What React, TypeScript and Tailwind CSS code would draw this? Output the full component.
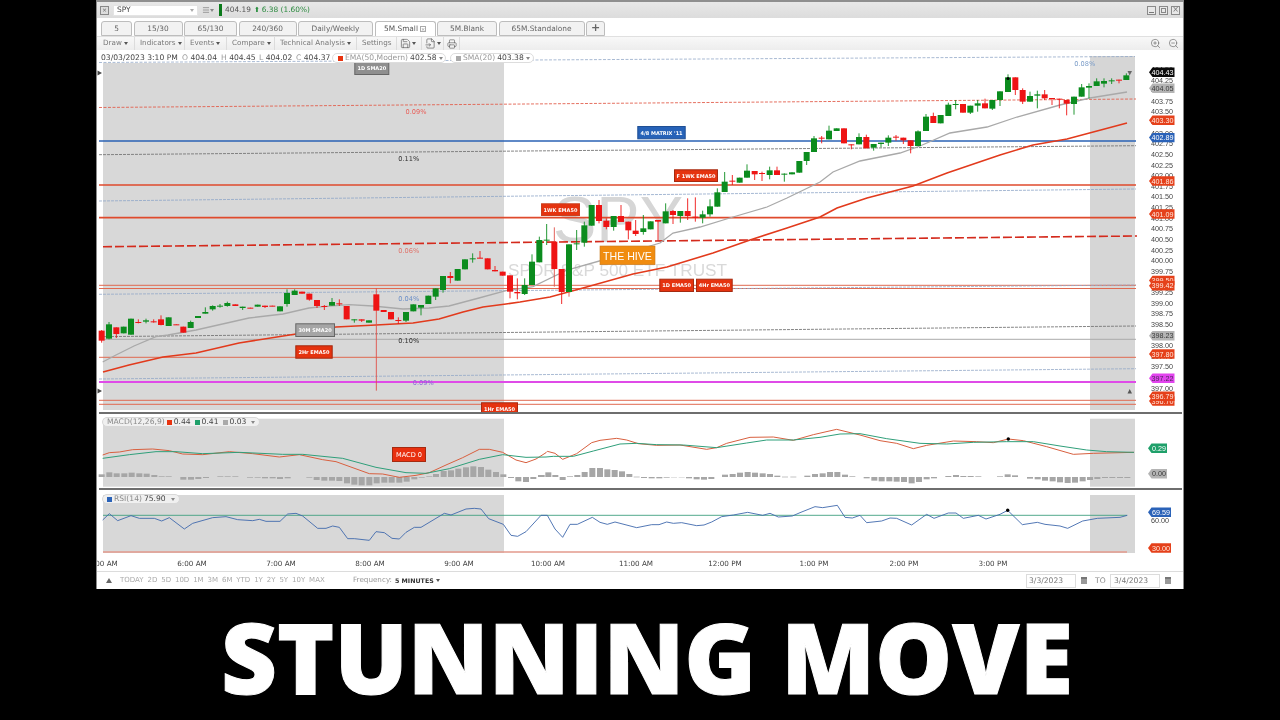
import { Save, FileInput, Printer, ZoomIn, ZoomOut, Menu } from "lucide-react";

type Row = [number, number, number, number, number, string];
const zone = (ox: number, oy: number, rows: Row[]) =>
  rows.map(([x, t, b, wt, wb, c]) => ({
    x: x / 3 + ox,
    t: t / 3 + oy,
    b: b / 3 + oy,
    wt: wt / 3 + oy,
    wb: wb / 3 + oy,
    c,
  }));

const candles = [
  ...zone(96, 240, [
    [17, 272, 302, 270, 308, "r"], [39, 253, 296, 246, 298, "g"], [61, 262, 282, 262, 294, "r"], [83, 260, 280, 260, 280, "g"],
    [105, 236, 284, 236, 284, "g"], [127, 246, 249, 238, 250, "r"], [150, 241, 245, 236, 250, "g"], [173, 244, 246, 238, 248, "r"],
    [195, 238, 255, 226, 256, "r"], [218, 232, 258, 232, 258, "g"], [241, 253, 255, 253, 255, "r"], [262, 260, 278, 260, 278, "r"],
    [284, 246, 264, 242, 264, "g"], [306, 228, 234, 228, 234, "g"], [328, 216, 221, 202, 221, "g"], [350, 198, 208, 196, 212, "g"],
    [372, 197, 199, 192, 203, "g"], [394, 189, 198, 185, 200, "g"], [418, 193, 198, 193, 198, "r"], [440, 200, 204, 200, 210, "g"],
    [463, 203, 205, 203, 205, "r"], [485, 194, 200, 194, 200, "g"], [507, 197, 201, 197, 204, "r"], [529, 197, 199, 197, 199, "r"],
    [552, 199, 214, 199, 214, "g"], [573, 159, 192, 148, 200, "g"], [596, 152, 165, 148, 165, "g"], [618, 155, 161, 155, 161, "r"],
    [640, 161, 179, 161, 182, "r"], [663, 180, 198, 180, 204, "r"], [685, 198, 200, 195, 210, "r"], [708, 186, 197, 174, 197, "g"],
    [730, 190, 192, 178, 198, "r"], [752, 198, 238, 198, 238, "r"], [775, 238, 240, 238, 248, "g"], [797, 238, 242, 238, 246, "r"],
    [819, 241, 248, 241, 248, "g"], [841, 163, 212, 144, 452, "r"], [863, 210, 216, 210, 216, "r"], [885, 216, 238, 216, 238, "r"],
    [907, 240, 242, 232, 252, "r"], [930, 216, 242, 216, 246, "g"], [952, 193, 214, 193, 214, "g"], [975, 195, 203, 195, 226, "g"],
    [997, 167, 192, 167, 192, "g"], [1019, 145, 170, 145, 180, "g"], [1041, 108, 150, 108, 158, "g"], [1063, 108, 114, 96, 130, "r"],
    [1085, 87, 122, 87, 122, "g"], [1107, 58, 88, 58, 88, "g"], [1130, 55, 57, 40, 68, "g"], [1152, 53, 55, 33, 55, "r"],
    [1175, 55, 88, 55, 88, "r"], [1197, 90, 94, 78, 94, "r"],
  ]),
  ...zone(500, 120, [
    [8, 455, 467, 455, 467, "r"], [30, 466, 515, 466, 535, "r"], [52, 516, 520, 475, 538, "r"], [74, 495, 522, 475, 525, "g"],
    [96, 425, 495, 403, 495, "g"], [118, 360, 427, 350, 427, "g"], [140, 359, 362, 312, 375, "g"], [163, 365, 447, 322, 500, "r"],
    [185, 447, 516, 447, 552, "r"], [207, 373, 516, 373, 530, "g"], [230, 370, 373, 330, 390, "g"], [253, 316, 368, 305, 380, "g"],
    [275, 255, 317, 255, 317, "g"], [297, 255, 303, 240, 310, "r"], [319, 302, 321, 295, 328, "r"], [341, 288, 321, 288, 332, "g"],
    [363, 288, 306, 255, 306, "r"], [385, 305, 331, 305, 358, "r"], [407, 332, 342, 300, 348, "r"], [430, 325, 336, 285, 344, "g"],
    [452, 304, 328, 304, 328, "g"], [474, 300, 305, 300, 362, "r"], [497, 274, 310, 250, 310, "g"], [519, 273, 285, 270, 312, "r"],
    [541, 273, 288, 273, 308, "g"], [563, 273, 288, 235, 300, "r"], [586, 290, 292, 232, 305, "r"], [608, 283, 293, 272, 310, "g"],
    [630, 259, 283, 238, 290, "g"], [652, 217, 260, 205, 260, "g"], [674, 185, 216, 156, 216, "g"], [697, 182, 185, 165, 195, "r"],
    [719, 173, 188, 173, 188, "g"], [741, 152, 173, 133, 173, "g"], [764, 153, 163, 153, 180, "r"], [786, 159, 161, 155, 183, "r"],
    [809, 151, 165, 140, 178, "g"], [831, 151, 165, 140, 165, "r"], [853, 161, 163, 160, 185, "g"], [876, 157, 163, 157, 163, "g"],
    [898, 123, 158, 123, 158, "g"], [920, 96, 123, 96, 135, "g"],
  ]),
  ...zone(800, 60, [
    [42, 235, 276, 228, 276, "g"], [65, 233, 236, 228, 250, "r"], [87, 212, 238, 197, 238, "g"], [110, 205, 213, 205, 213, "g"],
    [132, 205, 250, 205, 250, "r"], [154, 253, 256, 253, 268, "r"], [177, 231, 253, 220, 253, "g"], [199, 231, 265, 224, 265, "r"],
    [221, 252, 263, 252, 272, "g"], [243, 248, 252, 248, 262, "g"], [265, 233, 248, 226, 258, "g"], [288, 230, 232, 225, 242, "r"],
    [310, 233, 241, 233, 252, "r"], [332, 241, 258, 241, 280, "r"], [354, 214, 258, 211, 258, "g"], [378, 170, 213, 162, 213, "g"],
    [400, 168, 189, 158, 189, "r"], [422, 165, 190, 165, 190, "g"], [445, 134, 168, 128, 168, "g"], [467, 132, 134, 120, 148, "g"],
    [489, 132, 158, 132, 158, "r"], [511, 137, 158, 137, 162, "g"], [533, 130, 137, 120, 155, "g"], [555, 130, 145, 116, 145, "r"],
    [577, 120, 146, 120, 150, "g"], [600, 94, 120, 94, 138, "g"], [624, 52, 96, 43, 96, "g"], [646, 52, 90, 52, 105, "r"],
    [668, 90, 125, 85, 132, "r"], [690, 108, 125, 95, 125, "g"], [712, 103, 107, 92, 145, "g"], [734, 103, 115, 90, 120, "r"],
    [756, 114, 116, 114, 135, "r"], [778, 116, 118, 116, 145, "r"], [800, 120, 131, 120, 166, "r"], [822, 110, 132, 110, 164, "g"],
    [845, 82, 110, 72, 110, "g"], [867, 78, 83, 70, 115, "g"], [890, 64, 78, 55, 78, "g"], [912, 63, 71, 55, 82, "g"],
    [935, 61, 63, 55, 72, "g"], [957, 59, 61, 59, 70, "r"], [979, 46, 60, 40, 60, "g"],
  ]),
];

const toPts = (ox: number, oy: number, p: number[][]) => p.map(([x, y]) => `${x / 3 + ox},${y / 3 + oy}`).join(" ");

const sma = "102.7,362 116,355 134,346 156,336.7 168,335 196,330 249,318 283,314 309,308 323,306.7 349,304.7 373,306 403,309 429,308 449,306 479,298 506,290.7 533,286.7 567,270 610,258 660,243 673,233 700,227 733,217 767,207 787,198 820,182 833,172 860,161 900,153 920,146 950,133 987,127 1017,117 1060,105 1090,98 1127,92";
const ema = "103,372 129,365 163,357 196,353 239,343 296,334 336,327 376,325 413,323 439,319 463,312 483,307 506,304 520,302 550,297 583,288 633,274 667,267 713,253 750,240 787,228 820,217 837,208 867,198 913,186 947,173 1000,155 1033,145 1067,139 1127,123";

const macdRed = [
  toPts(96, 410, [[20,135],[40,128],[70,126],[110,119],[170,117],[220,122],[260,132],[320,134],[400,125],[470,131],[550,141],[610,134],[680,149],[720,155],[820,191],[860,192],[910,202],[960,196],[1000,188],[1050,165],[1100,143],[1150,118],[1180,118],[1220,127],[1260,150],[1290,158],[1320,147],[1350,128]]),
  toPts(540, 410, [[22,124],[45,130],[68,148],[110,131],[155,98],[180,91],[230,85],[260,90],[295,101],[350,106],[420,105],[500,118],[530,113],[560,100],[630,82],[700,81],[760,91],[820,74],[890,58],[960,75]]),
  toPts(860, 410, [[60,92],[110,100],[160,116],[200,106],[280,93],[350,95],[400,98],[445,87],[490,92],[560,110],[640,133],[700,130],[822,127]]),
].join(" ");
const macdGreen = [
  toPts(96, 410, [[20,145],[100,134],[180,125],[240,125],[320,131],[430,127],[560,133],[620,133],[740,145],[840,172],[930,188],[990,190],[1060,176],[1150,148],[1220,134],[1290,142],[1350,141]]),
  toPts(540, 410, [[40,139],[100,139],[160,123],[240,102],[290,100],[350,104],[430,105],[530,113],[620,99],[680,90],[760,90],[840,82],[900,72],[960,71]]),
  toPts(860, 410, [[80,86],[180,100],[260,102],[340,97],[440,95],[520,95],[600,108],[680,120],[740,125],[822,127]]),
].join(" ");
const rsi = [
  toPts(96, 410, [[20,330],[40,311],[65,332],[105,317],[130,325],[175,325],[197,333],[220,323],[265,357],[290,340],[350,323],[390,320],[425,329],[470,332],[490,328],[510,334],[552,334],[575,312],[600,310],[620,318],[665,355],[690,355],[710,348],[730,352],[755,386],[775,386],[820,391],[840,365],[865,368],[888,385],[910,387],[930,367],[955,352],[975,352],[1045,310],[1065,315],[1110,297],[1135,295],[1155,297],[1178,326],[1222,343],[1245,376],[1265,379],[1290,365],[1335,316],[1350,316]]),
  toPts(540, 410, [[22,316],[45,357],[68,382],[90,343],[112,343],[157,322],[180,337],[202,343],[225,336],[290,353],[335,344],[357,344],[380,336],[400,340],[425,338],[470,347],[492,345],[515,336],[545,320],[580,315],[623,307],[668,316],[690,310],[715,321],[757,318],[780,308],[825,290],[848,293],[892,286],[915,322],[937,324],[960,316]]),
  toPts(860, 410, [[20,338],[65,333],[90,324],[110,325],[155,345],[200,313],[222,325],[265,309],[288,309],[310,325],[355,316],[378,327],[420,313],[443,301],[487,344],[532,337],[555,343],[600,348],[623,355],[668,333],[712,325],[780,322],[802,316]]),
].join(" ");

const hist = (ox: number, rows: number[][]) => rows.map(([x, t, b]) => ({ x: x / 3 + ox, t: t / 3 + 410, b: b / 3 + 410 }));
const bars = [
  ...hist(96, [[17,193,201],[40,187,201],[62,190,201],[85,190,201],[107,188,201],[130,190,201],[152,191,201],[175,195,201],[197,198,200],[218,198,200],[262,201,209],[285,201,209],[307,201,207],[330,201,204],[373,199,201],[395,199,201],[418,199,201],[462,201,203],[485,201,203],[507,201,205],[530,201,205],[552,201,207],[575,201,205],[640,201,203],[662,201,210],[685,201,212],[708,201,212],[730,201,213],[753,201,220],[775,201,224],[797,201,226],[820,201,226],[842,201,220],[865,201,218],[887,201,218],[910,201,218],[932,201,215],[955,201,208],[977,201,203],[1000,199,201],[1020,192,201],[1043,183,201],[1065,181,201],[1087,176,201],[1110,172,201],[1132,169,201],[1155,171,201],[1177,179,201],[1200,186,201],[1222,193,201],[1245,201,204],[1267,201,214],[1290,201,216],[1312,201,207],[1335,195,201]]),
  ...hist(540, [[5,195,201],[25,187,201],[46,195,201],[68,201,210],[90,199,201],[112,195,201],[134,186,201],[157,174,201],[180,174,201],[202,178,201],[224,180,201],[246,184,201],[268,192,201],[290,200,202],[312,201,204],[335,201,205],[358,201,205],[380,201,203],[402,201,202],[425,201,202],[447,201,205],[470,201,208],[492,201,209],[514,201,207],[555,194,201],[578,192,201],[600,188,201],[623,186,201],[645,188,201],[668,190,201],[690,192,201],[712,197,201],[735,200,202],[760,200,202],[802,197,201],[825,192,201],[848,190,201],[870,186,201],[892,186,201],[915,194,201],[937,199,201]]),
  ...hist(860, [[20,201,205],[43,201,212],[65,201,214],[88,201,214],[110,201,215],[132,201,216],[155,201,220],[177,201,216],[200,201,208],[222,201,205],[265,198,201],[288,195,201],[310,198,201],[332,198,201],[355,199,201],[420,199,201],[443,193,201],[465,196,201],[510,201,206],[533,201,208],[555,201,212],[578,201,214],[600,201,217],[623,201,219],[645,201,218],[668,201,214],[690,201,210],[712,201,207],[735,201,204],[757,201,204],[780,201,204],[802,201,204]]),
];

const ticks: { v: string; y: number }[] = [];
for (let v = 404.5; v >= 397; v -= 0.25) ticks.push({ v: v.toFixed(2), y: 80 + (404.25 - v) * 42.48 });

const flagColors: Record<string, [string, string]> = {
  black: ["#0a0a0a", "#ffffff"],
  gray: ["#b4b4b4", "#3a3a3a"],
  red: ["#e5401a", "#ffe9df"],
  blue: ["#2a62b8", "#ffffff"],
  mag: ["#e244ee", "#4a2a5a"],
  green: ["#1fa06a", "#ffffff"],
};
const Flag = ({ y, t, c, x0 = 1149, x1 = 1174.5 }: { y: number; t: string; c: string; x0?: number; x1?: number }) => (
  <g>
    <polygon points={`${x0},${y} ${x0 + 3.5},${y - 4.7} ${x1},${y - 4.7} ${x1},${y + 4.7} ${x0 + 3.5},${y + 4.7}`} fill={flagColors[c][0]} />
    <text x={x1 - 1} y={y + 2.6} textAnchor="end" fontSize="7.2" fontWeight="500" fill={flagColors[c][1]} className="font-['Liberation_Sans',sans-serif]">{t}</text>
  </g>
);

const Tag = ({ x0, x1, y0, y1, t, fill, edge }: { x0: number; x1: number; y0: number; y1: number; t: string; fill: string; edge: string }) => (
  <g>
    <rect x={x0 + 0.5} y={y0 + 0.5} width={x1 - x0 - 1} height={y1 - y0 - 1} fill={fill} stroke={edge} strokeWidth="1" />
    <text x={(x0 + x1) / 2} y={(y0 + y1) / 2 + 1.9} textAnchor="middle" fontSize="5" fontWeight="700" fill="#fff" className="font-['DejaVu_Sans',sans-serif]">{t}</text>
  </g>
);

const Pct = ({ x, y, t, c }: { x: number; y: number; t: string; c: string }) => (
  <text x={x} y={y + 2.4} textAnchor="middle" fontSize="6.6" fill={c} className="font-['DejaVu_Sans',sans-serif]">{t}</text>
);

const tabs = [
  { t: "5", w: "w-[31px]" },
  { t: "15/30", w: "w-[49px]" },
  { t: "65/130", w: "w-[53px]" },
  { t: "240/360", w: "w-[58px]" },
  { t: "Daily/Weekly", w: "w-[75px]" },
  { t: "5M.Small", w: "w-[61px]", on: true },
  { t: "5M.Blank", w: "w-[60px]" },
  { t: "65M.Standalone", w: "w-[86px]" },
  { t: "+", w: "w-[19px]", plus: true },
];

const tools = [
  { t: "Draw", w: "w-[38px]" },
  { t: "Indicators", w: "w-[50px]" },
  { t: "Events", w: "w-[42px]" },
  { t: "Compare", w: "w-[48px]" },
  { t: "Technical Analysis", w: "w-[82px]" },
];

const periods = ["TODAY", "2D", "5D", "10D", "1M", "3M", "6M", "YTD", "1Y", "2Y", "5Y", "10Y", "MAX"];

const Caret = ({ c = "border-t-[#666]" }: { c?: string }) => (
  <span className={`inline-block w-0 h-0 border-x-[2px] border-x-transparent border-t-[3px] ${c}`} />
);

const WinBox = ({ children }: { children: React.ReactNode }) => (
  <div className="w-[9px] h-[9px] border border-[#8a8a8a] bg-[#e8e8e8] flex items-center justify-center text-[#777]">{children}</div>
);

export default function App() {
  return (
    <div className="w-[1280px] h-[720px] bg-black flex flex-col overflow-hidden font-['DejaVu_Sans',sans-serif]">
      <div className="ml-[96px] w-[1088px] h-[589px] shrink-0 bg-white flex flex-col border-x border-[#8a8a8a] blur-[0.3px]">
        {/* title bar */}
        <div className="h-[18px] shrink-0 flex items-center border-t-2 border-[#8f8f8f] bg-gradient-to-b from-[#e8e8e8] to-[#dcdcdc] pl-[3px] pr-[3px]">
          <div className="w-[9px] h-[9px] border border-[#888] bg-[#ddd] flex items-center justify-center text-[6px] leading-none text-[#666]">×</div>
          <div className="ml-[4px] w-[85px] h-[11px] bg-white border border-[#e4e4e4] flex items-center justify-between px-[3px] text-[7.5px] text-[#444]">
            <span>SPY</span>
            <Caret c="border-t-[#aaa]" />
          </div>
          <Menu size={8} className="ml-[4px] text-[#777]" />
          <Caret c="border-t-[#888]" />
          <div className="ml-[5px] w-[3px] h-[12px] bg-[#0b7a1a]" />
          <span className="ml-[3px] text-[7.4px] text-[#555]">404.19</span>
          <span className="ml-[3px] text-[7px] leading-none text-[#1e8a35]">⬆</span>
          <span className="ml-[2px] text-[7.4px] text-[#2a8a3e]">6.38 (1.60%)</span>
          <div className="ml-auto flex gap-[3px]">
            <WinBox><span className="w-[5px] h-[1px] mt-[4px] bg-[#777]" /></WinBox>
            <WinBox><span className="w-[5px] h-[5px] border border-[#888]" /></WinBox>
            <WinBox><span className="text-[8px] leading-none">×</span></WinBox>
          </div>
        </div>
        {/* tabs */}
        <div className="h-[18px] shrink-0 flex items-end gap-[1.5px] pl-[4px] pt-[3px] bg-white">
          {tabs.map((t) => (
            <div
              key={t.t}
              className={`${t.w} h-[15px] shrink-0 flex items-center justify-center gap-[2px] rounded-t-[3px] border border-[#bdbdbd] text-[7.4px] ${t.on ? "border-b-0 bg-white text-[#555]" : "bg-[#f2f2f2] text-[#666]"} ${t.plus ? "text-[11px] font-bold" : ""}`}
            >
              {t.t}
              {t.on && <span className="w-[6px] h-[6px] border border-[#aaa] flex items-center justify-center text-[5px] leading-none text-[#888]">×</span>}
            </div>
          ))}
        </div>
        {/* toolbar */}
        <div className="h-[14px] shrink-0 flex items-center bg-gradient-to-b from-[#f8f8f8] to-[#ededed] border-t border-[#e0e0e0] text-[7.2px] text-[#777]">
          {tools.map((t) => (
            <div key={t.t} className={`${t.w} h-full flex items-center gap-[2px] border-r border-[#dcdcdc] ${t.t === "Draw" ? "pl-[6px]" : "pl-[5px]"}`}>
              {t.t}
              <Caret c="border-t-[#555]" />
            </div>
          ))}
          <div className="w-[40px] h-full flex items-center border-r border-[#dcdcdc] pl-[5px]">Settings</div>
          <div className="w-[25px] h-full flex items-center gap-[1px] border-r border-[#dcdcdc] pl-[3px]">
            <Save size={11} strokeWidth={1.4} className="text-[#555]" />
            <Caret c="border-t-[#555]" />
          </div>
          <div className="w-[22px] h-full flex items-center gap-[1px] border-r border-[#dcdcdc] pl-[3px]">
            <FileInput size={11} strokeWidth={1.4} className="text-[#555]" />
            <Caret c="border-t-[#555]" />
          </div>
          <div className="w-[16px] h-full flex items-center border-r border-[#dcdcdc] pl-[3px]">
            <Printer size={10} strokeWidth={1.4} className="text-[#555]" />
          </div>
          <div className="ml-auto flex gap-[7px] pr-[4px]">
            <ZoomIn size={11} strokeWidth={1.4} className="text-[#666]" />
            <ZoomOut size={11} strokeWidth={1.4} className="text-[#666]" />
          </div>
        </div>
        {/* main chart */}
        <div className="relative h-[362px] shrink-0 overflow-hidden">
          <svg viewBox="97 50 1086 362" className="block w-[1086px] h-[362px]">
            <rect x="103" y="63" width="401" height="347" fill="#d8d8d8" />
            <rect x="1090" y="56" width="45" height="354" fill="#d6d6d6" />
            <text x="553" y="242" fontSize="65" fill="#d6d6d6" className="font-['Liberation_Sans',sans-serif]">SPY</text>
            <text x="508" y="276" fontSize="17.2" fill="#d9d9d9" className="font-['Liberation_Sans',sans-serif]">SPDR S&amp;P 500 ETF TRUST</text>

            <line x1="99" y1="62.5" x2="1135" y2="56.5" stroke="#93a8c8" strokeWidth="0.8" strokeDasharray="3 1.5" />
            <line x1="99" y1="107.5" x2="1136" y2="99" stroke="#e2604e" strokeWidth="0.9" strokeDasharray="3 1.5" />
            <line x1="99" y1="141" x2="1136" y2="141" stroke="#2a62b5" strokeWidth="1.6" />
            <line x1="99" y1="154.7" x2="1136" y2="145.7" stroke="#777" strokeWidth="0.9" strokeDasharray="3 1" />
            <line x1="99" y1="185" x2="1136" y2="185" stroke="#df4a2c" strokeWidth="1.7" />
            <line x1="99" y1="201" x2="1136" y2="189" stroke="#8ea6c8" strokeWidth="0.8" strokeDasharray="3 1" />
            <line x1="99" y1="217.7" x2="1136" y2="217.7" stroke="#df4a2c" strokeWidth="1.7" />
            <line x1="103" y1="246.7" x2="1137" y2="236" stroke="#d42a1c" strokeWidth="1.6" strokeDasharray="9 3" />
            <line x1="99" y1="285.3" x2="1136" y2="285.3" stroke="#e06a50" strokeWidth="1" />
            <line x1="99" y1="288.5" x2="1136" y2="288.5" stroke="#e06a50" strokeWidth="1" />
            <line x1="99" y1="294.3" x2="1136" y2="285" stroke="#93a8c8" strokeWidth="0.8" strokeDasharray="3 1" />
            <line x1="99" y1="336.7" x2="1136" y2="326" stroke="#777" strokeWidth="0.9" strokeDasharray="3 1" />
            <line x1="99" y1="339.3" x2="1136" y2="339.3" stroke="#ababab" strokeWidth="1" />
            <line x1="99" y1="357.3" x2="1136" y2="357.3" stroke="#e06a50" strokeWidth="1" />
            <line x1="99" y1="379" x2="1136" y2="368.7" stroke="#93a8c8" strokeWidth="0.8" strokeDasharray="3 1" />
            <line x1="99" y1="382" x2="1136" y2="382" stroke="#df4be8" strokeWidth="2.2" />
            <line x1="99" y1="400.3" x2="1136" y2="400.3" stroke="#e06a50" strokeWidth="1" />
            <line x1="99" y1="404.3" x2="1136" y2="404.3" stroke="#e06a50" strokeWidth="1" />

            <polyline points={sma} fill="none" stroke="#a9a9a9" strokeWidth="1.3" />
            <polyline points={ema} fill="none" stroke="#e23a1c" strokeWidth="1.6" />

            {candles.map((k, i) => {
              const col = k.c === "g" ? "#0b8c1e" : "#ee1414";
              return (
                <g key={i}>
                  <line x1={k.x} x2={k.x} y1={k.wt} y2={k.wb} stroke={k.wb - k.wt > 50 ? "#e0504a" : col} strokeWidth="0.9" />
                  <rect x={k.x - 3} y={k.t} width="6" height={Math.max(1, k.b - k.t)} fill={col} />
                </g>
              );
            })}
            <circle cx="1008" cy="78.5" r="1.6" fill="#000" />
            <polygon points="1127.5,71 1132,71 1129.7,75.5" fill="#666" />
            <polygon points="97.5,70.5 97.5,75.5 102,73" fill="#444" />
            <polygon points="97.5,388.5 97.5,393.5 102,391" fill="#444" />
            <polygon points="1127.5,393.5 1132,393.5 1129.7,389" fill="#555" />

            <Pct x={416} y={111.7} t="0.09%" c="#e8605a" />
            <Pct x={408.7} y={158.7} t="0.11%" c="#333" />
            <Pct x={408.7} y={250.7} t="0.06%" c="#e0736a" />
            <Pct x={408.7} y={298.3} t="0.04%" c="#6a8fc8" />
            <Pct x={408.7} y={340.3} t="0.10%" c="#333" />
            <Pct x={423.3} y={382.3} t="0.09%" c="#8a6ad8" />
            <Pct x={1084.7} y={63.3} t="0.08%" c="#7a9cc8" />

            <Tag x0={354.3} x1={389.3} y0={61.7} y1={75} t="1D SMA20" fill="#8f8f8f" edge="#666" />
            <Tag x0={637.3} x1={685.7} y0={126} y1={139.3} t="4/8 MATRIX '11" fill="#2662b8" edge="#1f4f94" />
            <Tag x0={674} x1={718} y0={169.3} y1={182} t="F 1WK EMA50" fill="#e5330f" edge="#a52a10" />
            <Tag x0={541} x1={580} y0={203.3} y1={216} t="1WK EMA50" fill="#e5330f" edge="#c8401f" />
            <Tag x0={659.3} x1={694} y0={278.7} y1={292} t="1D EMA50" fill="#e5330f" edge="#a52a10" />
            <Tag x0={696} x1={732.7} y0={278.7} y1={292} t="4Hr EMA50" fill="#e5330f" edge="#a52a10" />
            <Tag x0={295.3} x1={335} y0={323.3} y1={337} t="30M SMA20" fill="#a5a5a5" edge="#666" />
            <Tag x0={295.3} x1={332.7} y0={345.3} y1={358.7} t="2Hr EMA50" fill="#e5330f" edge="#a52a10" />
            <Tag x0={481} x1={518} y0={402.3} y1={416} t="1Hr EMA50" fill="#e5330f" edge="#a52a10" />
            <rect x="600" y="246" width="55" height="18.7" fill="#f08c10" stroke="#c87a20" strokeWidth="0.6" />
            <text x="627.5" y="259.5" textAnchor="middle" fontSize="10.6" fill="#fff" className="font-['Liberation_Sans',sans-serif]">THE HIVE</text>

            {ticks.map((t) => (
              <text key={t.v} x={1173} y={t.y + 2.6} textAnchor="end" fontSize="7.2" fill="#444" className="font-['Liberation_Sans',sans-serif]">{t.v}</text>
            ))}
            <Flag y={72.3} t="404.43" c="black" />
            <Flag y={88.3} t="404.05" c="gray" />
            <Flag y={120.3} t="403.30" c="red" />
            <Flag y={137.6} t="402.89" c="blue" />
            <Flag y={181} t="401.86" c="red" />
            <Flag y={214} t="401.09" c="red" />
            <Flag y={280.5} t="399.50" c="red" />
            <Flag y={285.7} t="399.42" c="red" />
            <Flag y={335.7} t="398.23" c="gray" />
            <Flag y={354} t="397.80" c="red" />
            <Flag y={378.3} t="397.22" c="mag" />
            <Flag y={401} t="396.70" c="red" />
            <Flag y={396.3} t="396.79" c="red" />
          </svg>
          {/* legend */}
          <div className="absolute left-[4px] top-[3px] h-[10px] flex items-center text-[7.6px] text-[#444] whitespace-nowrap">
            <span className="w-[81px]">03/03/2023 3:10 PM</span>
            <span className="w-[39px]"><span className="text-[#999]">O </span>404.04</span>
            <span className="w-[38px]"><span className="text-[#999]">H </span>404.45</span>
            <span className="w-[37px]"><span className="text-[#999]">L </span>404.02</span>
            <span className="w-[36px]"><span className="text-[#999]">C </span>404.37</span>
            <span className="w-[114px] h-[10px] flex items-center gap-[2px] rounded-[5px] border border-[#ddd] bg-white pl-[5px]">
              <span className="w-[5px] h-[5px] bg-[#e8330f]" />
              <span className="text-[#999]">EMA(50,Modern)</span> 402.58
              <Caret c="border-t-[#888]" />
            </span>
            <span className="ml-[4px] w-[84px] h-[10px] flex items-center gap-[2px] rounded-[5px] border border-[#ddd] bg-white pl-[5px]">
              <span className="w-[5px] h-[5px] bg-[#aaa]" />
              <span className="text-[#999]">SMA(20)</span> 403.38
              <Caret c="border-t-[#888]" />
            </span>
          </div>
        </div>
        <div className="h-[2px] shrink-0 mr-[1px] ml-[2px] bg-[#6e6e6e]" />
        {/* MACD */}
        <div className="relative h-[74px] shrink-0 overflow-hidden">
          <svg viewBox="97 414 1086 74" className="block w-[1086px] h-[74px]">
            <rect x="103" y="418.7" width="401" height="68" fill="#d8d8d8" />
            <rect x="1090" y="418.7" width="45" height="68" fill="#d6d6d6" />
            {bars.map((b, i) => (
              <rect key={i} x={b.x - 3} y={b.t} width="6" height={b.b - b.t} fill="#a6a6a6" />
            ))}
            <polyline points={macdRed} fill="none" stroke="#d8603f" strokeWidth="1" />
            <polyline points={macdGreen} fill="none" stroke="#2f9f7a" strokeWidth="1" />
            <circle cx="1008.3" cy="439" r="1.7" fill="#000" />
            <rect x="392.5" y="447.5" width="33" height="14" fill="#e8300f" stroke="#a52a10" />
            <text x="409" y="457" textAnchor="middle" fontSize="6.6" fill="#fff" className="font-['DejaVu_Sans',sans-serif]">MACD 0</text>
            <Flag y={448.3} t="0.29" c="green" x0={1148} x1={1167} />
            <Flag y={473.7} t="0.00" c="gray" x0={1148} x1={1167} />
          </svg>
          <div className="absolute left-[5px] top-[3px] h-[10px] flex items-center gap-[2px] rounded-[5px] border border-[#d8d8d8] bg-[#f0f0f0] px-[4px] text-[7.6px] text-[#444] whitespace-nowrap">
            <span className="text-[#888]">MACD(12,26,9)</span>
            <span className="w-[5px] h-[5px] bg-[#e8330f]" />0.44
            <span className="ml-[2px] w-[5px] h-[5px] bg-[#1fa06a]" />0.41
            <span className="ml-[2px] w-[5px] h-[5px] bg-[#aaa]" />0.03
            <span className="ml-[3px]"><Caret c="border-t-[#888]" /></span>
          </div>
        </div>
        <div className="h-[2px] shrink-0 mr-[1px] ml-[2px] bg-[#6e6e6e]" />
        {/* RSI */}
        <div className="relative h-[66px] shrink-0 overflow-hidden">
          <svg viewBox="97 490 1086 66" className="block w-[1086px] h-[66px]">
            <rect x="103" y="495" width="401" height="58" fill="#d8d8d8" />
            <rect x="1090" y="495" width="45" height="58" fill="#d6d6d6" />
            <line x1="103" y1="552" x2="1127" y2="552" stroke="#e39a8c" strokeWidth="1.6" />
            <line x1="103" y1="515.3" x2="1127" y2="515.3" stroke="#3f9f7f" strokeWidth="0.9" />
            <polyline points={rsi} fill="none" stroke="#3f69ad" strokeWidth="0.9" />
            <circle cx="1007.7" cy="510.3" r="1.7" fill="#000" />
            <Flag y={512.3} t="69.59" c="blue" x0={1148} x1={1171} />
            <text x="1169" y="523.2" textAnchor="end" fontSize="7.2" fill="#444" className="font-['Liberation_Sans',sans-serif]">60.00</text>
            <Flag y={548} t="30.00" c="red" x0={1148} x1={1171} />
          </svg>
          <div className="absolute left-[5px] top-[4px] h-[10px] flex items-center gap-[2px] rounded-[5px] border border-[#d8d8d8] bg-[#f0f0f0] px-[4px] text-[7.6px] text-[#444] whitespace-nowrap">
            <span className="w-[5px] h-[5px] bg-[#2a62b8]" />
            <span className="text-[#888]">RSI(14)</span> 75.90
            <span className="ml-[3px]"><Caret c="border-t-[#888]" /></span>
          </div>
        </div>
        {/* time axis */}
        <div className="h-[15px] shrink-0">
          <svg viewBox="97 556 1086 15" className="block w-[1086px] h-[15px]">
            {[
              [103, "5:00 AM"], [192, "6:00 AM"], [281, "7:00 AM"], [370, "8:00 AM"], [459, "9:00 AM"],
              [548, "10:00 AM"], [636, "11:00 AM"], [725, "12:00 PM"], [814, "1:00 PM"], [904, "2:00 PM"], [993, "3:00 PM"],
            ].map(([x, t]) => (
              <text key={t} x={x} y="565.5" textAnchor="middle" fontSize="7.2" fill="#444" className="font-['DejaVu_Sans',sans-serif]">{t}</text>
            ))}
          </svg>
        </div>
        {/* footer */}
        <div className="h-[18px] shrink-0 flex items-center border-t border-[#dcdcdc] pl-[9px] pr-[12px] text-[7px] text-[#aaa]">
          <span className="w-0 h-0 border-x-[3px] border-x-transparent border-b-[5px] border-b-[#666]" />
          <div className="ml-[8px] flex items-center gap-[3.9px] w-[233px]">
            {periods.map((p) => (
              <span key={p}>{p}</span>
            ))}
          </div>
          <span className="text-[#999] text-[7.2px]">Frequency:</span>
          <span className="ml-[3px] font-bold text-[#333] text-[6.3px]">5 MINUTES</span>
          <span className="ml-[2px]"><Caret c="border-t-[#555]" /></span>
          <div className="ml-auto flex items-center text-[7.6px] text-[#777]">
            <div className="w-[50px] h-[14px] border border-[#dcdcdc] flex items-center pl-[2px]">3/3/2023</div>
            <span className="ml-[5px] w-[6px] h-[7px] bg-[#999] border-t-2 border-[#777]" />
            <span className="ml-[8px] w-[13px] text-[#888]">TO</span>
            <div className="ml-[2px] w-[50px] h-[14px] border border-[#dcdcdc] flex items-center pl-[3px]">3/4/2023</div>
            <span className="ml-[5px] w-[6px] h-[7px] bg-[#999] border-t-2 border-[#777]" />
          </div>
        </div>
      </div>
      <div className="flex-1 flex items-center justify-center pl-[14px] pt-[4px] text-white font-['Open_Sans',sans-serif] font-extrabold text-[97px] leading-none whitespace-nowrap [-webkit-text-stroke:1px_white]">
        STUNNING MOVE
      </div>
    </div>
  );
}
